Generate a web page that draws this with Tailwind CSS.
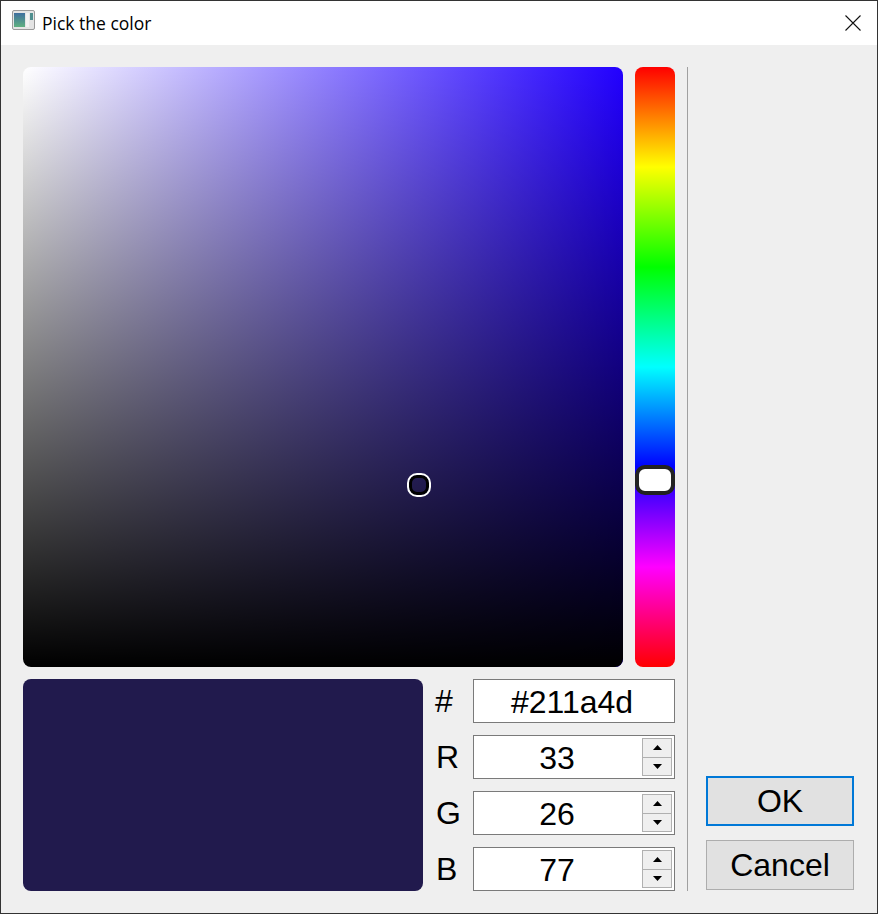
<!DOCTYPE html>
<html>
<head>
<meta charset="utf-8">
<script src="https://cdn.jsdelivr.net/npm/@tailwindcss/browser@4"></script>
</head>
<body class="m-0 bg-[#efefef]">
<div class="w-[878px] h-[914px] border border-[#333333] bg-[#efefef] font-['Liberation_Sans',Arial,sans-serif] text-[32px] text-black flex flex-col overflow-hidden">
  <div class="h-[44px] bg-white flex items-center shrink-0 pl-[11px] pr-[16px]">
    <svg width="23" height="20" viewBox="0 0 23 20" class="shrink-0 mb-[6px]">
      <defs><linearGradient id="g" x1="0" y1="0" x2="0" y2="1"><stop offset="0" stop-color="#3f6f9f"/><stop offset="1" stop-color="#5fb080"/></linearGradient></defs>
      <rect x="0.5" y="0.5" width="22" height="19" rx="1.5" fill="#e4e4e4" stroke="#9a9a9a"/>
      <rect x="2" y="3" width="11" height="14" fill="url(#g)"/>
      <rect x="14" y="3" width="3" height="14" fill="#f2f2f2"/>
      <rect x="18" y="3" width="3" height="7" fill="#4f8f8f"/>
    </svg>
    <span class="ml-[7px] font-['Open_Sans',sans-serif] font-normal text-[17.5px] leading-none text-black pt-[2px]">Pick the color</span>
    <svg width="16" height="16" viewBox="0 0 16 16" class="ml-auto shrink-0"><path d="M0.5 0.5L15.5 15.5M15.5 0.5L0.5 15.5" stroke="#111" stroke-width="1.1" fill="none"/></svg>
  </div>
  <div class="flex-1 flex pl-[22px] pt-[22px]">
    <div class="w-[652px] flex flex-col gap-[12px]">
      <div class="flex gap-[12px]">
        <div class="relative w-[600px] h-[600px] rounded-[8px] overflow-hidden bg-[linear-gradient(to_right,#ffffff,#2200ff)]">
          <div class="absolute inset-0 bg-[linear-gradient(to_bottom,rgba(0,0,0,0),#000000)]"></div>
          <div class="absolute left-[384px] top-[406px] w-[24px] h-[24px] rounded-[10px] border-2 border-white ring-[3px] ring-inset ring-black"></div>
        </div>
        <div class="relative w-[40px] h-[600px] rounded-[8px] bg-[linear-gradient(to_bottom,#ff0000,#ffff00_16.667%,#00ff00_33.333%,#00ffff_50%,#0000ff_66.667%,#ff00ff_83.333%,#ff0000)]">
          <div class="absolute left-0 top-[398px] w-[40px] h-[30px] rounded-[10px] border-4 border-[#222222] bg-white"></div>
        </div>
      </div>
      <div class="flex gap-[12px]">
        <div class="w-[400px] h-[212px] rounded-[8px] bg-[#211a4d]"></div>
        <div class="w-[240px] flex flex-col gap-[12px]">
          <div class="h-[44px] flex items-center justify-between">
            <span>#</span>
            <div class="w-[202px] h-[44px] bg-white border border-[#7a7a7a] flex items-center justify-center pt-[2px] pr-[4px]">#211a4d</div>
          </div>
          <div class="h-[44px] flex items-center justify-between">
            <span class="pl-[1px]">R</span>
            <div class="w-[202px] h-[44px] bg-white border border-[#7a7a7a] flex items-center pr-[2px]">
              <span class="flex-1 text-center pt-[2px] pr-[2px]">33</span>
              <div class="w-[30px] h-[38px] border border-[#b0b0b0] bg-[#efefef] flex flex-col">
                <div class="flex-1 flex items-center justify-center border-b border-[#b0b0b0]"><svg width="9" height="5" viewBox="0 0 9 5"><path d="M4.5 0L9 5H0Z" fill="#000"/></svg></div>
                <div class="flex-1 flex items-center justify-center"><svg width="9" height="5" viewBox="0 0 9 5"><path d="M0 0H9L4.5 5Z" fill="#000"/></svg></div>
              </div>
            </div>
          </div>
          <div class="h-[44px] flex items-center justify-between">
            <span class="pl-[1px]">G</span>
            <div class="w-[202px] h-[44px] bg-white border border-[#7a7a7a] flex items-center pr-[2px]">
              <span class="flex-1 text-center pt-[2px] pr-[2px]">26</span>
              <div class="w-[30px] h-[38px] border border-[#b0b0b0] bg-[#efefef] flex flex-col">
                <div class="flex-1 flex items-center justify-center border-b border-[#b0b0b0]"><svg width="9" height="5" viewBox="0 0 9 5"><path d="M4.5 0L9 5H0Z" fill="#000"/></svg></div>
                <div class="flex-1 flex items-center justify-center"><svg width="9" height="5" viewBox="0 0 9 5"><path d="M0 0H9L4.5 5Z" fill="#000"/></svg></div>
              </div>
            </div>
          </div>
          <div class="h-[44px] flex items-center justify-between">
            <span class="pl-[1px]">B</span>
            <div class="w-[202px] h-[44px] bg-white border border-[#7a7a7a] flex items-center pr-[2px]">
              <span class="flex-1 text-center pt-[2px] pr-[2px]">77</span>
              <div class="w-[30px] h-[38px] border border-[#b0b0b0] bg-[#efefef] flex flex-col">
                <div class="flex-1 flex items-center justify-center border-b border-[#b0b0b0]"><svg width="9" height="5" viewBox="0 0 9 5"><path d="M4.5 0L9 5H0Z" fill="#000"/></svg></div>
                <div class="flex-1 flex items-center justify-center"><svg width="9" height="5" viewBox="0 0 9 5"><path d="M0 0H9L4.5 5Z" fill="#000"/></svg></div>
              </div>
            </div>
          </div>
        </div>
      </div>
    </div>
    <div class="ml-[12px] w-[1px] h-[824px] bg-[#a0a0a0]"></div>
    <div class="ml-[18px] w-[148px] h-[823px] flex flex-col justify-end gap-[14px]">
      <div class="h-[50px] bg-[#e1e1e1] border-2 border-[#0078d7] flex items-center justify-center">OK</div>
      <div class="h-[50px] bg-[#e1e1e1] border border-[#adadad] flex items-center justify-center">Cancel</div>
    </div>
  </div>
</div>
</body>
</html>
